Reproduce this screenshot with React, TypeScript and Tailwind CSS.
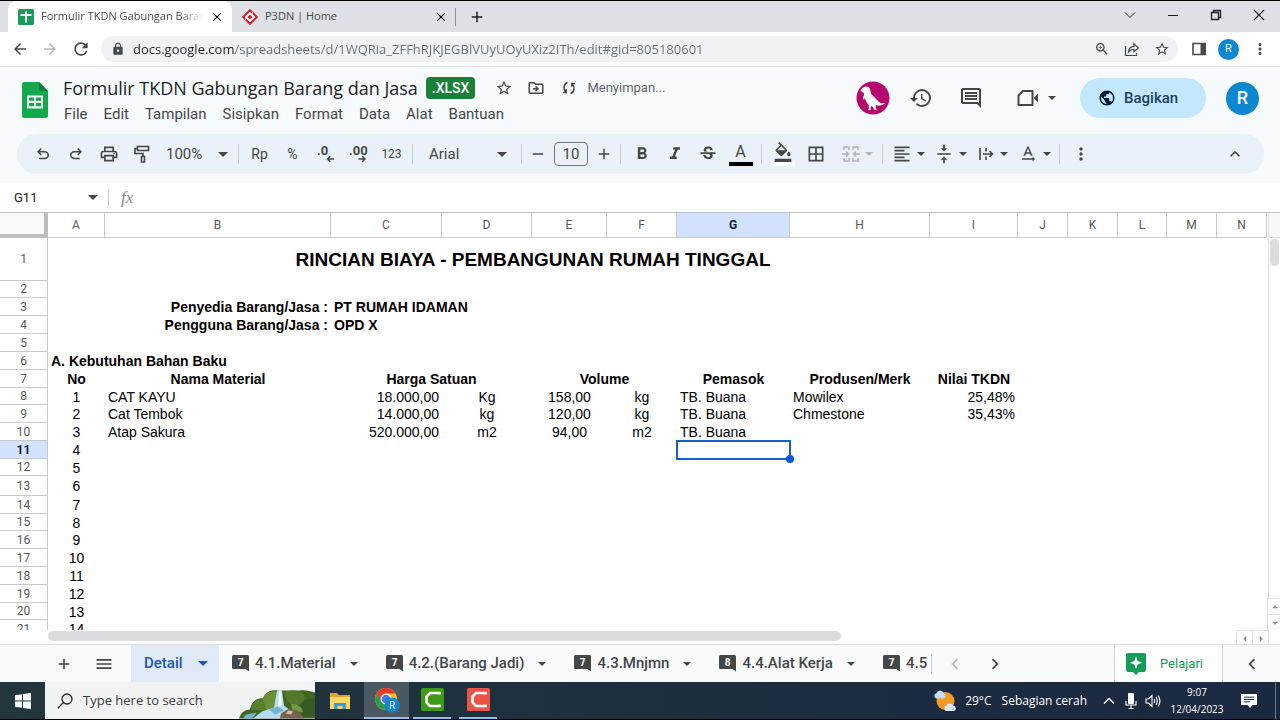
import React, { useState } from 'react';
import {
    MdAdd,
    MdArrowBack,
    MdArrowDropDown,
    MdArrowDropUp,
    MdArrowForward,
    MdArrowLeft,
    MdArrowRight,
    MdBorderAll,
    MdChevronLeft,
    MdChevronRight,
    MdClose,
    MdExpandLess,
    MdFormatAlignLeft,
    MdFormatBold,
    MdFormatColorFill,
    MdFormatItalic,
    MdHistory,
    MdLock,
    MdMenu,
    MdMoreVert,
    MdOutlineDriveFileMove,
    MdOutlineInsertComment,
    MdOutlinePrint,
    MdOutlineZoomIn,
    MdPublic,
    MdRefresh,
    MdRemove,
    MdStarOutline,
    MdStrikethroughS,
    MdTextRotationNone,
    MdVerticalAlignCenter
} from 'react-icons/md';

interface Cell {
    text: string;
    span?: number;
    align?: 'left' | 'center' | 'right';
    bold?: boolean;
    title?: boolean;
}

interface Row {
    height: number;
    cells?: Cell[];
}

const COLUMNS = [
    { id: 'A', width: 57 },
    { id: 'B', width: 226 },
    { id: 'C', width: 111 },
    { id: 'D', width: 90 },
    { id: 'E', width: 75 },
    { id: 'F', width: 70 },
    { id: 'G', width: 113 },
    { id: 'H', width: 140 },
    { id: 'I', width: 88 },
    { id: 'J', width: 50 },
    { id: 'K', width: 50 },
    { id: 'L', width: 49 },
    { id: 'M', width: 50 },
    { id: 'N', width: 50 }
];

const SELECTED_COLUMN = 'G';
const SELECTED_ROW = 11;

const item = (
    no: string,
    nama = '',
    harga = '',
    satuan = '',
    volume = '',
    unit = '',
    pemasok = '',
    merk = '',
    tkdn = ''
): Cell[] => [
    { text: no, align: 'center' },
    { text: nama },
    { text: harga, align: 'right' },
    { text: satuan, align: 'center' },
    { text: volume, align: 'center' },
    { text: unit, align: 'center' },
    { text: pemasok },
    { text: merk },
    { text: tkdn, align: 'right' }
];

const ROWS: Row[] = [
    { height: 43, cells: [{ text: 'RINCIAN BIAYA - PEMBANGUNAN RUMAH TINGGAL', span: 9, align: 'center', title: true }] },
    { height: 17 },
    {
        height: 18,
        cells: [
            { text: 'Penyedia Barang/Jasa :', span: 2, align: 'right', bold: true },
            { text: 'PT RUMAH IDAMAN', span: 7, bold: true }
        ]
    },
    {
        height: 18,
        cells: [
            { text: 'Pengguna Barang/Jasa :', span: 2, align: 'right', bold: true },
            { text: 'OPD X', span: 7, bold: true }
        ]
    },
    { height: 18 },
    { height: 18, cells: [{ text: 'A. Kebutuhan Bahan Baku', span: 9, bold: true }] },
    {
        height: 18,
        cells: [
            { text: 'No', align: 'center', bold: true },
            { text: 'Nama Material', align: 'center', bold: true },
            { text: 'Harga Satuan', span: 2, align: 'center', bold: true },
            { text: 'Volume', span: 2, align: 'center', bold: true },
            { text: 'Pemasok', align: 'center', bold: true },
            { text: 'Produsen/Merk', align: 'center', bold: true },
            { text: 'Nilai TKDN', align: 'center', bold: true }
        ]
    },
    { height: 17, cells: item('1', 'CAT KAYU', '18.000,00', 'Kg', '158,00', 'kg', 'TB. Buana', 'Mowilex', '25,48%') },
    { height: 18, cells: item('2', 'Cat Tembok', '14.000,00', 'kg', '120,00', 'kg', 'TB. Buana', 'Chmestone', '35,43%') },
    { height: 18, cells: item('3', 'Atap Sakura', '520.000,00', 'm2', '94,00', 'm2', 'TB. Buana') },
    { height: 18, cells: item('4') },
    { height: 17, cells: item('5') },
    { height: 20, cells: item('6') },
    { height: 18, cells: item('7') },
    { height: 17, cells: item('8') },
    { height: 18, cells: item('9') },
    { height: 18, cells: item('10') },
    { height: 18, cells: item('11') },
    { height: 18, cells: item('12') },
    { height: 17, cells: item('13') },
    { height: 18, cells: item('14') }
];

const MENUS = ['File', 'Edit', 'Tampilan', 'Sisipkan', 'Format', 'Data', 'Alat', 'Bantuan'];

const SHEETS = [
    { name: '4.1.Material', comments: '7' },
    { name: '4.2.(Barang Jadi)', comments: '7' },
    { name: '4.3.Mnjmn', comments: '7' },
    { name: '4.4.Alat Kerja', comments: '8' }
];

const ALIGN = {
    left: 'text-left',
    center: 'text-center',
    right: 'text-right'
};

const Caret = ({ className = 'h-[5px] w-[10px]' }: { className?: string }) => (
    <svg viewBox="0 0 10 5" className={`shrink-0 fill-current ${className}`}>
        <path d="M0 0h10L5 5z" />
    </svg>
);

const Divider = () => <span className="mx-1 h-5 w-px shrink-0 bg-[#c4c8cc]" />;

interface ToolProps {
    label: string;
    wide?: boolean;
    muted?: boolean;
    children: React.ReactNode;
}

const Tool = ({ label, wide, muted, children }: ToolProps) => (
    <button
        type="button"
        aria-label={label}
        className={`flex h-8 shrink-0 items-center justify-center text-[20px] ${wide ? 'w-[42px] gap-[5px]' : 'w-[33px]'} ${muted ? 'ml-1 text-[#b0b5b9]' : ''}`}
    >
        {children}
        {wide && <Caret className="h-1 w-2" />}
    </button>
);

const SheetsFavicon = () => (
    <svg viewBox="0 0 16 16" className="size-4 shrink-0">
        <rect width="16" height="16" rx="1.5" fill="#179c5c" />
        <path d="M2.5 6h11M8 2.5v11" stroke="#fff" strokeWidth="2" />
    </svg>
);

const P3dnFavicon = () => (
    <svg viewBox="0 0 16 16" className="size-4 shrink-0">
        <path d="M8 1.2 14.8 8 8 14.8 1.2 8z" fill="#fff" stroke="#d3202a" strokeWidth="2" />
        <path d="M3 10.5 8 6M11 3.5 8 6" stroke="#fff" strokeWidth="1" />
        <path d="M8 5.4 10.6 8 8 10.6 5.4 8z" fill="#d3202a" />
    </svg>
);

const SheetsLogo = () => (
    <svg viewBox="0 0 26 36" className="h-9 w-[26px] shrink-0">
        <path d="M2.5 0H17l9 9v24.500a2.500 2.500 0 0 1-2.500 2.500h-21A2.500 2.500 0 0 1 0 33.500v-31A2.500 2.500 0 0 1 2.500 0z" fill="#12a84c" />
        <path d="M17 0l9 9h-6.500A2.500 2.500 0 0 1 17 6.500z" fill="#0b8039" />
        <path fillRule="evenodd" d="M5 13.500h16v13H5zM7 15.500v3.200h5v-3.200zM14 15.500v3.200h5v-3.200zM7 21v3.300h5V21zM14 21v3.300h5V21z" fill="#eefaf1" />
    </svg>
);

const Dinosaur = () => (
    <svg viewBox="0 0 34 34" className="size-[34px] shrink-0" role="img" aria-label="Dinosaurus Anonim">
        <circle cx="17" cy="17" r="16.500" fill="#b5096f" />
        <path
            d="M4.500 10 6 7.200l3.200-1.700 3.300.5 1.600 2.200 1 4.600 4 4.200 3.600 3.800 2.600 1.800 4-.6-2.600 1.800-4.200.9-2.600-.6-.4 1.600.8 1.600.2 1.500h-2.200l-1.600-3-1.800-.9-.3 2.300.3 1.900h-3l1-1.500-.3-3.800-2.400-3-1.300-3.600-1.300 1.700-.6-2.300 1-2.400-.2-2.500z"
            fill="#fff"
        />
    </svg>
);

const TabStrip = () => (
    <div className="flex h-8 shrink-0 items-stretch border-t border-black bg-[#dee1e6] font-['Open_Sans',sans-serif] text-[11px] text-[#45494d]">
        <div className="ml-2 flex w-56 shrink-0 items-center gap-[7px] rounded-t-lg bg-white pr-2 pl-2.5">
            <SheetsFavicon />
            <span className="min-w-0 flex-1 overflow-hidden [mask-image:linear-gradient(to_right,#000_85%,transparent)] whitespace-nowrap">
                Formulir TKDN Gabungan Barang
            </span>
            <button type="button" aria-label="Tutup tab" className="text-sm text-black">
                <MdClose />
            </button>
        </div>
        <div className="flex w-[223px] shrink-0 items-center gap-[7px] pr-[7px] pl-2.5">
            <P3dnFavicon />
            <span className="flex-1">P3DN | Home</span>
            <button type="button" aria-label="Tutup tab" className="text-sm text-black">
                <MdClose />
            </button>
        </div>
        <span className="my-auto h-[18px] w-px bg-[#8f9398]" />
        <button type="button" aria-label="Tab baru" className="ml-3 text-lg text-[#202124]">
            <MdAdd />
        </button>
        <div className="ml-auto flex pb-1 text-[#202124]">
            <button type="button" aria-label="Telusuri tab" className="flex w-[43px] items-center justify-center">
                <svg viewBox="0 0 12 12" className="size-3 fill-none stroke-current">
                    <path d="M1 3.500l5 5 5-5" />
                </svg>
            </button>
            <button type="button" aria-label="Minimalkan" className="flex w-[43px] items-center justify-center">
                <svg viewBox="0 0 12 12" className="size-3 fill-none stroke-current">
                    <path d="M1 6.500h10" />
                </svg>
            </button>
            <button type="button" aria-label="Pulihkan" className="flex w-[43px] items-center justify-center">
                <svg viewBox="0 0 12 12" className="size-3 fill-none stroke-current" strokeWidth="1.300">
                    <path d="M1.500 3.500h7v7h-7zM3.500 3V1.500h7v7H9" />
                </svg>
            </button>
            <button type="button" aria-label="Tutup" className="flex w-[43px] items-center justify-center">
                <svg viewBox="0 0 12 12" className="size-3 fill-none stroke-current" strokeWidth="1.200">
                    <path d="M1 1l10 10M11 1L1 11" />
                </svg>
            </button>
        </div>
    </div>
);

const AddressBar = () => {
    const [url, setUrl] = useState('docs.google.com/spreadsheets/d/1WQRia_ZFFhRJKJEGBlVUyUOyUXiz2ITh/edit#gid=805180601');

    return (
        <div className="flex h-[35px] shrink-0 items-center border-b border-[#dcdfe2] bg-white pl-[11px] text-lg text-[#46494d]">
            <button type="button" aria-label="Kembali">
                <MdArrowBack />
            </button>
            <button type="button" aria-label="Maju" className="ml-3 text-[#b5b8bb]">
                <MdArrowForward />
            </button>
            <button type="button" aria-label="Muat ulang" className="ml-3 text-xl">
                <MdRefresh />
            </button>
            <div className="ml-2.5 flex h-[26px] min-w-0 flex-1 items-center rounded-full bg-[#eff1f3] pr-2">
                <MdLock className="ml-2.5 shrink-0 text-sm" />
                <input
                    type="text"
                    aria-label="Alamat situs"
                    spellCheck={false}
                    value={url}
                    onChange={(e) => setUrl(e.target.value)}
                    className="ml-2 min-w-0 flex-1 bg-[linear-gradient(to_right,#202124_101px,#6a6e73_101px)] bg-clip-text font-['Open_Sans',sans-serif] text-[13px] text-transparent caret-black outline-none"
                />
                <button type="button" aria-label="Perbesar" className="text-base">
                    <MdOutlineZoomIn />
                </button>
                <button type="button" aria-label="Bagikan halaman" className="ml-3.5">
                    <svg viewBox="0 0 16 16" className="size-4 fill-none stroke-current" strokeWidth="1.200">
                        <path d="M1.500 5v9.500h11V12M4.500 11c.3-3.600 2.400-5.400 5.500-5.600V2.800L14.500 7 10 10.800V8.300c-2.400 0-4 .7-5.500 2.700z" />
                    </svg>
                </button>
                <button type="button" aria-label="Bookmark" className="ml-3.5 text-base">
                    <MdStarOutline />
                </button>
            </div>
            <button type="button" aria-label="Panel samping" className="ml-3.5">
                <svg viewBox="0 0 14 14" className="size-3.5">
                    <path d="M1 1.500h12v11H1z" fill="none" stroke="currentColor" strokeWidth="1.600" />
                    <path d="M8.500 1H14v12H8.500z" fill="currentColor" />
                </svg>
            </button>
            <button
                type="button"
                aria-label="Profil"
                className="ml-3 flex size-[21px] items-center justify-center rounded-full bg-[#0c87d0] text-[11px] text-white"
            >
                R
            </button>
            <button type="button" aria-label="Menu Chrome" className="mr-[11px] ml-3">
                <MdMoreVert />
            </button>
        </div>
    );
};

const DocHeader = () => (
    <header className="flex shrink-0 items-start pt-[7px] pr-[21px] pl-[22px]">
        <div className="pt-2">
            <SheetsLogo />
        </div>
        <div className="ml-[11px]">
            <div className="flex h-7 items-center pl-1">
                <h1 className="font-['Open_Sans',sans-serif] text-lg whitespace-nowrap text-[#1f1f1f]">
                    Formulir TKDN Gabungan Barang dan Jasa
                </h1>
                <span className="ml-2 rounded bg-[#188038] px-1.5 text-sm leading-[22px] font-medium text-white">.XLSX</span>
                <button type="button" aria-label="Bintangi" className="ml-5 text-lg">
                    <MdStarOutline />
                </button>
                <button type="button" aria-label="Pindahkan" className="ml-3.5 text-lg">
                    <MdOutlineDriveFileMove />
                </button>
                <svg viewBox="0 0 16 16" className="ml-4 size-4 fill-none stroke-current" strokeWidth="1.500">
                    <path d="M6.500 2.500C2.500 4 1.800 9 4.800 12M2 12.500h3.200V9.300M9.500 13.500c4-1.500 4.700-6.500 1.700-9.500M14 3.500h-3.200v3.200" />
                </svg>
                <span className="ml-2.5 text-[13px] text-[#5f6368]">Menyimpan...</span>
            </div>
            <nav className="flex h-6 items-center gap-4 pl-[5px] text-[15px]">
                {MENUS.map((menu) => (
                    <button key={menu} type="button">
                        {menu}
                    </button>
                ))}
            </nav>
        </div>
        <div className="ml-auto flex items-center pt-1">
            <Dinosaur />
            <button type="button" aria-label="Riwayat versi" className="ml-1.5 flex w-[50px] justify-center text-2xl">
                <MdHistory />
            </button>
            <button type="button" aria-label="Komentar" className="flex w-[50px] justify-center text-2xl">
                <MdOutlineInsertComment />
            </button>
            <button type="button" aria-label="Gabung ke panggilan" className="ml-5 flex items-center gap-2">
                <svg viewBox="0 0 24 24" className="size-6 fill-none stroke-current" strokeWidth="2">
                    <path d="M7 5h9.500v14H2.500V9.500z" strokeLinejoin="round" />
                    <path d="M17.500 12 22 7.500v9z" fill="currentColor" stroke="none" />
                </svg>
                <Caret className="h-1 w-2" />
            </button>
            <button
                type="button"
                className="ml-6 flex h-10 w-[126px] items-center gap-2 rounded-full bg-[#c2e7ff] pl-[18px] text-[15px] font-medium text-[#1d3f5c]"
            >
                <MdPublic className="text-lg text-[#001d35]" />
                Bagikan
            </button>
            <button
                type="button"
                aria-label="Akun Google"
                className="ml-5 flex size-[33px] items-center justify-center rounded-full bg-[#0c87d0] text-lg font-medium text-white"
            >
                R
            </button>
        </div>
    </header>
);

const Toolbar = () => {
    const [zoom, setZoom] = useState('100%');
    const [font, setFont] = useState('Arial');
    const [size, setSize] = useState('10');

    return (
        <div className="mt-2 mr-4 mb-[9px] ml-[17px] flex h-10 shrink-0 items-center rounded-full bg-[#eaf1f9] pr-3 pl-[9px] text-[#444746]">
            <Tool label="Urungkan">
                <svg viewBox="0 -960 960 960" className="size-[18px] fill-current">
                    <path d="M280-200v-80h284q63 0 109.500-40T720-420q0-60-46.500-100T564-560H312l104 104-56 56-200-200 200-200 56 56-104 104h252q97 0 163.500 63T800-420q0 94-66.500 157T564-200H280Z" />
                </svg>
            </Tool>
            <Tool label="Ulangi">
                <svg viewBox="0 -960 960 960" className="size-[18px] fill-current">
                    <path d="M396-200q-97 0-163.500-63T160-420q0-94 66.500-157T396-640h252L544-744l56-56 200 200-200 200-56-56 104-104H396q-63 0-109.500 40T240-420q0 60 46.500 100T396-280h284v80H396Z" />
                </svg>
            </Tool>
            <Tool label="Cetak">
                <MdOutlinePrint />
            </Tool>
            <Tool label="Salin format">
                <svg viewBox="0 0 20 20" className="size-5 fill-none stroke-current" strokeWidth="1.600">
                    <path d="M5.500 2.500h11v4h-11zM5.500 4.500H3v5h8v3M9.500 12.500h3v5.500h-3z" />
                </svg>
            </Tool>
            <label className="flex w-[76px] shrink-0 items-center justify-between pr-1.5 pl-2">
                <select
                    aria-label="Zoom"
                    value={zoom}
                    onChange={(e) => setZoom(e.target.value)}
                    className="appearance-none bg-transparent text-[15px] outline-none"
                >
                    <option>100%</option>
                    <option>75%</option>
                </select>
                <Caret />
            </label>
            <Divider />
            <button type="button" className="w-[33px] shrink-0 text-sm">
                Rp
            </button>
            <button type="button" className="w-[33px] shrink-0 text-sm">
                %
            </button>
            <Tool label="Kurangi desimal">
                <svg viewBox="0 0 20 20" className="size-5 fill-current">
                    <text x="1" y="11" fontSize="13" fontWeight="700">
                        .0
                    </text>
                    <path d="M18 14.200h-4.700l1.400-1.400-1-1L10.500 15l3.200 3.200 1-1-1.400-1.400H18z" />
                </svg>
            </Tool>
            <Tool label="Tambah desimal">
                <svg viewBox="0 0 20 20" className="size-5 fill-current">
                    <text x="0" y="11" fontSize="13" fontWeight="700">
                        .00
                    </text>
                    <path d="M9.500 14.200h4.700l-1.400-1.400 1-1L17 15l-3.200 3.200-1-1 1.400-1.400H9.500z" />
                </svg>
            </Tool>
            <button type="button" className="w-[33px] shrink-0 text-xs">
                123
            </button>
            <Divider />
            <label className="flex w-[100px] shrink-0 items-center justify-between pr-2.5 pl-3">
                <select
                    aria-label="Font"
                    value={font}
                    onChange={(e) => setFont(e.target.value)}
                    className="appearance-none bg-transparent text-[15px] outline-none"
                >
                    <option>Arial</option>
                    <option>Roboto</option>
                </select>
                <Caret />
            </label>
            <Divider />
            <button type="button" aria-label="Kurangi ukuran font" className="flex w-6 justify-center text-lg">
                <MdRemove />
            </button>
            <input
                type="text"
                aria-label="Ukuran font"
                value={size}
                onChange={(e) => setSize(e.target.value)}
                className="mx-1 h-6 w-[34px] rounded border border-[#747775] bg-transparent text-center text-[15px] outline-none"
            />
            <button type="button" aria-label="Tambah ukuran font" className="flex w-6 justify-center text-lg">
                <MdAdd />
            </button>
            <Divider />
            <Tool label="Tebal">
                <MdFormatBold />
            </Tool>
            <Tool label="Miring">
                <MdFormatItalic />
            </Tool>
            <Tool label="Coret">
                <MdStrikethroughS />
            </Tool>
            <Tool label="Warna teks">
                <span className="flex w-6 flex-col items-center border-b-4 border-black text-base leading-5">A</span>
            </Tool>
            <Divider />
            <Tool label="Warna isian">
                <span className="flex h-6 w-6 flex-col items-center overflow-hidden border-b-4 border-white">
                    <MdFormatColorFill className="shrink-0" />
                </span>
            </Tool>
            <Tool label="Batas">
                <MdBorderAll />
            </Tool>
            <Tool label="Gabungkan sel" wide muted>
                <svg viewBox="0 0 18 18" className="size-[18px] fill-none stroke-current" strokeWidth="1.600">
                    <path d="M7 5V2H2v3M2 13v3h5v-3M11 5V2h5v3M16 13v3h-5v-3M0 9h6M4 6.500 6.500 9 4 11.500M18 9h-6M14 6.500 11.500 9l2.500 2.500" />
                </svg>
            </Tool>
            <Divider />
            <Tool label="Perataan horizontal" wide>
                <MdFormatAlignLeft />
            </Tool>
            <Tool label="Perataan vertikal" wide>
                <MdVerticalAlignCenter />
            </Tool>
            <Tool label="Pengemasan teks" wide>
                <svg viewBox="0 0 18 18" className="size-[18px] fill-none stroke-current" strokeWidth="1.600">
                    <path d="M3 3v12M9 3v3.500M9 11.500V15M6 9h9M12.500 6l3 3-3 3" />
                </svg>
            </Tool>
            <Tool label="Rotasi teks" wide>
                <MdTextRotationNone />
            </Tool>
            <Divider />
            <Tool label="Lainnya">
                <MdMoreVert />
            </Tool>
            <button type="button" aria-label="Sembunyikan menu" className="ml-auto flex w-[34px] justify-center text-xl">
                <MdExpandLess />
            </button>
        </div>
    );
};

const FormulaBar = () => {
    const [name, setName] = useState('G11');
    const [formula, setFormula] = useState('');

    return (
        <div className="flex h-[30px] shrink-0 items-center border-b border-[#c0c3c6] bg-white">
            <input
                type="text"
                aria-label="Kotak nama"
                value={name}
                onChange={(e) => setName(e.target.value)}
                className="ml-3.5 w-[74px] text-[13px] text-[#202124] outline-none"
            />
            <Caret className="h-[5px] w-[10px] text-[#444746]" />
            <span className="ml-2.5 h-4 w-px bg-[#c7c7c7]" />
            <label htmlFor="formula" className="ml-3 font-['Liberation_Serif',serif] text-[17px] text-[#80868b] italic">
                fx
            </label>
            <input
                id="formula"
                type="text"
                value={formula}
                onChange={(e) => setFormula(e.target.value)}
                className="ml-2 h-6 min-w-0 flex-1 font-['Liberation_Sans',sans-serif] text-sm outline-none"
            />
        </div>
    );
};

const SheetGrid = () => (
    <div className="min-w-0 flex-1 overflow-hidden">
        <table className="w-[1267px] table-fixed border-separate border-spacing-0">
            <colgroup>
                <col style={{ width: 48 }} />
                {COLUMNS.map((col) => (
                    <col key={col.id} style={{ width: col.width }} />
                ))}
            </colgroup>
            <thead>
                <tr className="h-[25px] text-xs text-[#55585c]">
                    <th aria-label="Pilih semua" className="border-r-4 border-b-4 border-[#bcbec0] bg-[#f8f9fa] p-0" />
                    {COLUMNS.map((col) => (
                        <th
                            key={col.id}
                            scope="col"
                            className={`border-r border-b border-[#c7c9cb] p-0 ${col.id === SELECTED_COLUMN ? 'bg-[#d3e3fd] font-bold text-[#041e49]' : 'font-normal'}`}
                        >
                            {col.id}
                        </th>
                    ))}
                </tr>
            </thead>
            <tbody>
                {ROWS.map((row, index) => {
                    const number = index + 1;
                    const selected = number === SELECTED_ROW;
                    return (
                        <tr key={number} style={{ height: row.height }}>
                            <th
                                scope="row"
                                className={`border-r border-b border-[#c7c9cb] p-0 text-xs leading-4 ${selected ? 'bg-[#d3e3fd] font-bold text-[#041e49]' : 'font-normal text-[#55585c]'}`}
                            >
                                {number}
                            </th>
                            {row.cells?.map((cell, i) => (
                                <td
                                    key={i}
                                    colSpan={cell.span}
                                    className={`relative px-[3px] py-0 font-['Liberation_Sans',Arial,sans-serif] leading-4 whitespace-nowrap text-black ${ALIGN[cell.align ?? 'left']} ${cell.title ? 'text-[19px] font-bold' : 'text-sm'} ${cell.bold ? 'font-bold' : ''}`}
                                >
                                    {cell.text}
                                    {selected && i === 6 && (
                                        <div className="absolute -inset-px border-2 border-[#1a5fc8]">
                                            <span className="absolute -right-[5px] -bottom-[5px] size-2 rounded-full bg-[#0b57d0]" />
                                        </div>
                                    )}
                                </td>
                            ))}
                        </tr>
                    );
                })}
            </tbody>
        </table>
    </div>
);

const ScrollButton = ({ label, children }: { label: string; children: React.ReactNode }) => (
    <button
        type="button"
        aria-label={label}
        className="flex h-4 w-4 shrink-0 items-center justify-center border-t border-l border-[#e3e3e3] bg-[#fbfbfb] text-sm text-[#8a8d91]"
    >
        {children}
    </button>
);

const CommentBadge = ({ count }: { count: string }) => (
    <svg viewBox="0 0 17 17" className="size-[17px] shrink-0">
        <path d="M1.500 0h14A1.500 1.500 0 0 1 17 1.500V16.500L13.500 14h-12A1.500 1.500 0 0 1 0 12.500v-11A1.500 1.500 0 0 1 1.500 0z" fill="#444746" />
        <text x="8.500" y="11" textAnchor="middle" fontSize="10" fontWeight="700" fill="#fff">
            {count}
        </text>
    </svg>
);

const SheetTabs = () => (
    <div className="flex h-[38px] shrink-0 items-stretch border-t border-[#dcdfe2] bg-[#f8fafc] text-[#444746]">
        <button type="button" aria-label="Tambah sheet" className="ml-11 flex w-10 items-center justify-center text-lg">
            <MdAdd />
        </button>
        <button type="button" aria-label="Semua sheet" className="flex w-10 items-center justify-center text-xl">
            <MdMenu />
        </button>
        <div className="ml-[7px] flex w-[800px] min-w-0 overflow-hidden text-[15px] font-medium">
            <button type="button" className="flex w-[88px] shrink-0 items-center justify-between bg-[#e1e9f7] pr-[11px] pl-[13px] text-[#1c57b5]">
                Detail
                <Caret />
            </button>
            {SHEETS.map((sheet) => (
                <button key={sheet.name} type="button" className="flex shrink-0 items-center pr-[15px] pl-[13px]">
                    <CommentBadge count={sheet.comments} />
                    <span className="ml-1.5">{sheet.name}</span>
                    <Caret className="ml-3.5 h-1 w-2" />
                </button>
            ))}
            <button type="button" className="flex shrink-0 items-center pl-[13px]">
                <CommentBadge count="7" />
                <span className="ml-1.5">4.5</span>
            </button>
        </div>
        <span className="my-auto h-5 w-px bg-[#c7c9cb]" />
        <button type="button" aria-label="Geser ke kiri" className="ml-3 flex w-6 items-center text-[22px] text-[#b5b8bb]">
            <MdChevronLeft />
        </button>
        <button type="button" aria-label="Geser ke kanan" className="ml-4 flex w-6 items-center text-[22px]">
            <MdChevronRight />
        </button>
        <button
            type="button"
            className="ml-auto flex w-[109px] shrink-0 items-center gap-3.5 border-x border-[#d0d3d6] bg-white pl-[11px] text-[13px] text-[#249a5c]"
        >
            <svg viewBox="0 0 20 22" className="h-[22px] w-5 shrink-0">
                <path d="M2 0h16a2 2 0 0 1 2 2v15a2 2 0 0 1-2 2h-5l-3 3-3-3H2a2 2 0 0 1-2-2V2a2 2 0 0 1 2-2z" fill="#149c58" />
                <path d="M10 3.500 11.700 8 16 9.700 11.700 11.400 10 16l-1.700-4.600L4 9.700 8.300 8z" fill="#fff" />
            </svg>
            Pelajari
        </button>
        <button type="button" aria-label="Tampilkan panel samping" className="flex w-[57px] shrink-0 items-center justify-center text-[22px]">
            <MdChevronLeft />
        </button>
    </div>
);

const Waterfall = () => (
    <svg viewBox="0 0 76 36" className="h-full w-[76px] shrink-0">
        <path d="M0 36c2-6 6-9 11-9 1-7 6-12 13-11 2-7 9-9 15-8h22c6-1 10 1 15 2v26z" fill="#41651f" />
        <path d="M12 27c0-6 5-11 11-10s7 7 4 11z" fill="#57802b" />
        <path d="M24 17c1-7 8-9 14-8l-1 16-9 3z" fill="#6b9138" />
        <path d="M46 9c7-2 17-1 19 4s-4 11-10 10-9-7-9-14z" fill="#55792a" />
        <path d="M61 23c3-6 9-8 15-6v16H63z" fill="#385a24" />
        <path d="M52 22c5-1 11 2 12 8l-10-1z" fill="#749a44" />
        <path d="M38 8h5l2 15 8 6-3 7H14l9-7 12-4z" fill="#b5dcec" />
        <path d="M40 8h2l1 14-4 3z" fill="#f0faff" />
        <path d="M30 27l9-3 6 4-9 4zM7 32l11-2-5 6H4z" fill="#71b5d4" />
        <path d="M42 31l8-5 9 2 6 8H41z" fill="#76644f" />
        <path d="M49 28l5 1-2 3-5-1z" fill="#d9c5a6" />
    </svg>
);

const ChromeLogo = () => (
    <svg viewBox="0 0 26 26" className="size-[26px]">
        <circle cx="12" cy="12" r="11" fill="#fbc116" />
        <path d="M12 12v11A11 11 0 0 1 2.500 6.500L7.700 14.500z" fill="#269f4b" />
        <path d="M12 6.500h9.500a11 11 0 0 0-19 0l4.700 8z" fill="#e33b2e" />
        <circle cx="12" cy="12" r="5.500" fill="#fff" />
        <circle cx="12" cy="12" r="4.300" fill="#3c7de6" />
        <circle cx="18" cy="18" r="7.500" fill="#1186d0" />
        <text x="18" y="21.500" textAnchor="middle" fontSize="10" fill="#fff">
            R
        </text>
    </svg>
);

const CamtasiaLogo = ({ fill }: { fill: string }) => (
    <svg viewBox="0 0 23 23" className="size-[23px]">
        <rect width="23" height="23" rx="1.500" fill={fill} />
        <path d="M18.500 6.500V5H9L5.500 8.500v6L9 18h9.500v-1.500" fill="none" stroke="#fff" strokeWidth="2.600" />
    </svg>
);

const Taskbar = () => (
    <footer className="flex h-[38px] shrink-0 items-stretch border-b border-black bg-linear-to-r from-[#22363d] to-[#1a2841] font-['Open_Sans',sans-serif] text-xs text-white">
        <button type="button" aria-label="Mulai" className="flex w-[45px] shrink-0 items-center justify-center">
            <svg viewBox="0 0 16 16" className="size-4 fill-white">
                <path d="M0 2.300 7 1.300v6.200H0zM8 1.100 16 0v7.500H8zM0 8.500h7v6.200L0 13.700zM8 8.500h8V16l-8-1.100z" />
            </svg>
        </button>
        <label className="flex w-[270px] shrink-0 items-center bg-[#f1f2f2] pl-3">
            <svg viewBox="0 0 16 16" className="size-4 shrink-0 fill-none stroke-[#26282a]" strokeWidth="1.300">
                <circle cx="10" cy="6" r="5" />
                <path d="M6.500 9.500.8 15.200" />
            </svg>
            <input
                type="search"
                aria-label="Type here to search"
                placeholder="Type here to search"
                className="ml-2.5 min-w-0 flex-1 bg-transparent text-[13px] text-black outline-none placeholder:text-[#3a3c3e]"
            />
            <Waterfall />
        </label>
        <button type="button" aria-label="File Explorer" className="flex w-[49px] items-center justify-center">
            <svg viewBox="0 0 22 18" className="h-[18px] w-[22px]">
                <path d="M1 1h7l2 2h11v14H1z" fill="#e0a32f" />
                <path d="M1 5h20v12H1z" fill="#fbd567" />
                <path d="M5 17v-6h12v6h-3.500v-3h-5v3z" fill="#3f9bd8" />
            </svg>
        </button>
        <button type="button" aria-label="Google Chrome" className="flex w-[45px] items-center justify-center border-b-2 border-[#8cc1ec] bg-[#4b5a62]">
            <ChromeLogo />
        </button>
        <button type="button" aria-label="Camtasia" className="ml-1 flex w-[38px] items-center justify-center border-b-2 border-[#8cc1ec]">
            <CamtasiaLogo fill="#3f9a13" />
        </button>
        <button type="button" aria-label="Camtasia Recorder" className="ml-2 flex w-[38px] items-center justify-center border-b-2 border-[#8cc1ec]">
            <CamtasiaLogo fill="#ea5345" />
        </button>
        <div className="ml-auto flex items-center whitespace-nowrap">
            <svg viewBox="0 0 24 22" className="h-[22px] w-6">
                <circle cx="12.500" cy="11" r="9" fill="#f39a26" />
                <path d="M3 8.500a3 3 0 0 1 .5-5.500 4 4 0 0 1 7.300 0 2.900 2.900 0 0 1-.5 5.500z" fill="#c9dcf5" />
                <path d="M13 21a3 3 0 0 1 .3-5.500 4 4 0 0 1 7.200.3A2.700 2.700 0 0 1 21 21z" fill="#dce8fa" />
            </svg>
            <span className="ml-2">29°C</span>
            <span className="ml-2.5">Sebagian cerah</span>
            <svg viewBox="0 0 12 12" className="ml-4 size-3 fill-none stroke-current" strokeWidth="1.300">
                <path d="M1 8.500l5-5 5 5" />
            </svg>
            <svg viewBox="0 0 12 16" className="ml-2.5 h-4 w-3">
                <rect x="3" width="6" height="11" rx="1" fill="#fff" />
                <path d="M1 8v4h10V8M6 12v4M3.500 15.500h5" fill="none" stroke="#fff" strokeWidth="1.100" />
            </svg>
            <svg viewBox="0 0 16 14" className="ml-2 h-3.5 w-4 fill-none stroke-current" strokeWidth="1.100">
                <path d="M1 5h2.500L7 1.500v11L3.500 9H1zM9 5q1.300 2 0 4M11 3q2.500 4 0 8M13 1.500q4 5.500 0 11" />
            </svg>
            <div className="ml-1 w-16 text-center text-[10px] leading-[17px]">
                <div>9:07</div>
                <div>12/04/2023</div>
            </div>
            <svg viewBox="0 0 16 16" className="ml-3 size-4">
                <path d="M0 1h16v11h-4.500L9 15l-2.500-3H0z" fill="#fff" />
                <path d="M3 4.200h10M3 6.500h10M3 8.800h6" stroke="#1a2841" />
            </svg>
            <span className="mr-1 ml-[18px] h-9 w-px bg-[#6c7788]" />
        </div>
    </footer>
);

export default function App() {
    return (
        <div className="flex h-screen flex-col overflow-hidden bg-[#f7fafc] font-[Roboto,sans-serif] text-[#444746]">
            <TabStrip />
            <AddressBar />
            <DocHeader />
            <Toolbar />
            <FormulaBar />
            <main className="flex min-h-0 flex-1 bg-white">
                <div className="flex min-w-0 flex-1 flex-col">
                    <div className="flex min-h-0 flex-1">
                        <SheetGrid />
                    </div>
                    <div className="flex h-3.5 shrink-0 items-start overflow-hidden pl-12">
                        <div className="mt-px h-2.5 w-[65%] rounded-full bg-[#dadce0]" />
                        <div className="ml-auto flex">
                            <ScrollButton label="Gulir ke kiri">
                                <MdArrowLeft />
                            </ScrollButton>
                            <ScrollButton label="Gulir ke kanan">
                                <MdArrowRight />
                            </ScrollButton>
                        </div>
                    </div>
                </div>
                <div className="flex w-3 shrink-0 flex-col items-center border-l border-[#e0e0e0]">
                    <div className="h-[25px] w-full border-b border-[#d5d7d9] bg-[#f8f8f8]" />
                    <div className="mt-px h-[27px] w-[9px] rounded-full bg-[#dadce0]" />
                    <div className="mt-auto mb-3.5 flex flex-col">
                        <ScrollButton label="Gulir ke atas">
                            <MdArrowDropUp />
                        </ScrollButton>
                        <ScrollButton label="Gulir ke bawah">
                            <MdArrowDropDown />
                        </ScrollButton>
                    </div>
                </div>
            </main>
            <SheetTabs />
            <Taskbar />
        </div>
    );
}
